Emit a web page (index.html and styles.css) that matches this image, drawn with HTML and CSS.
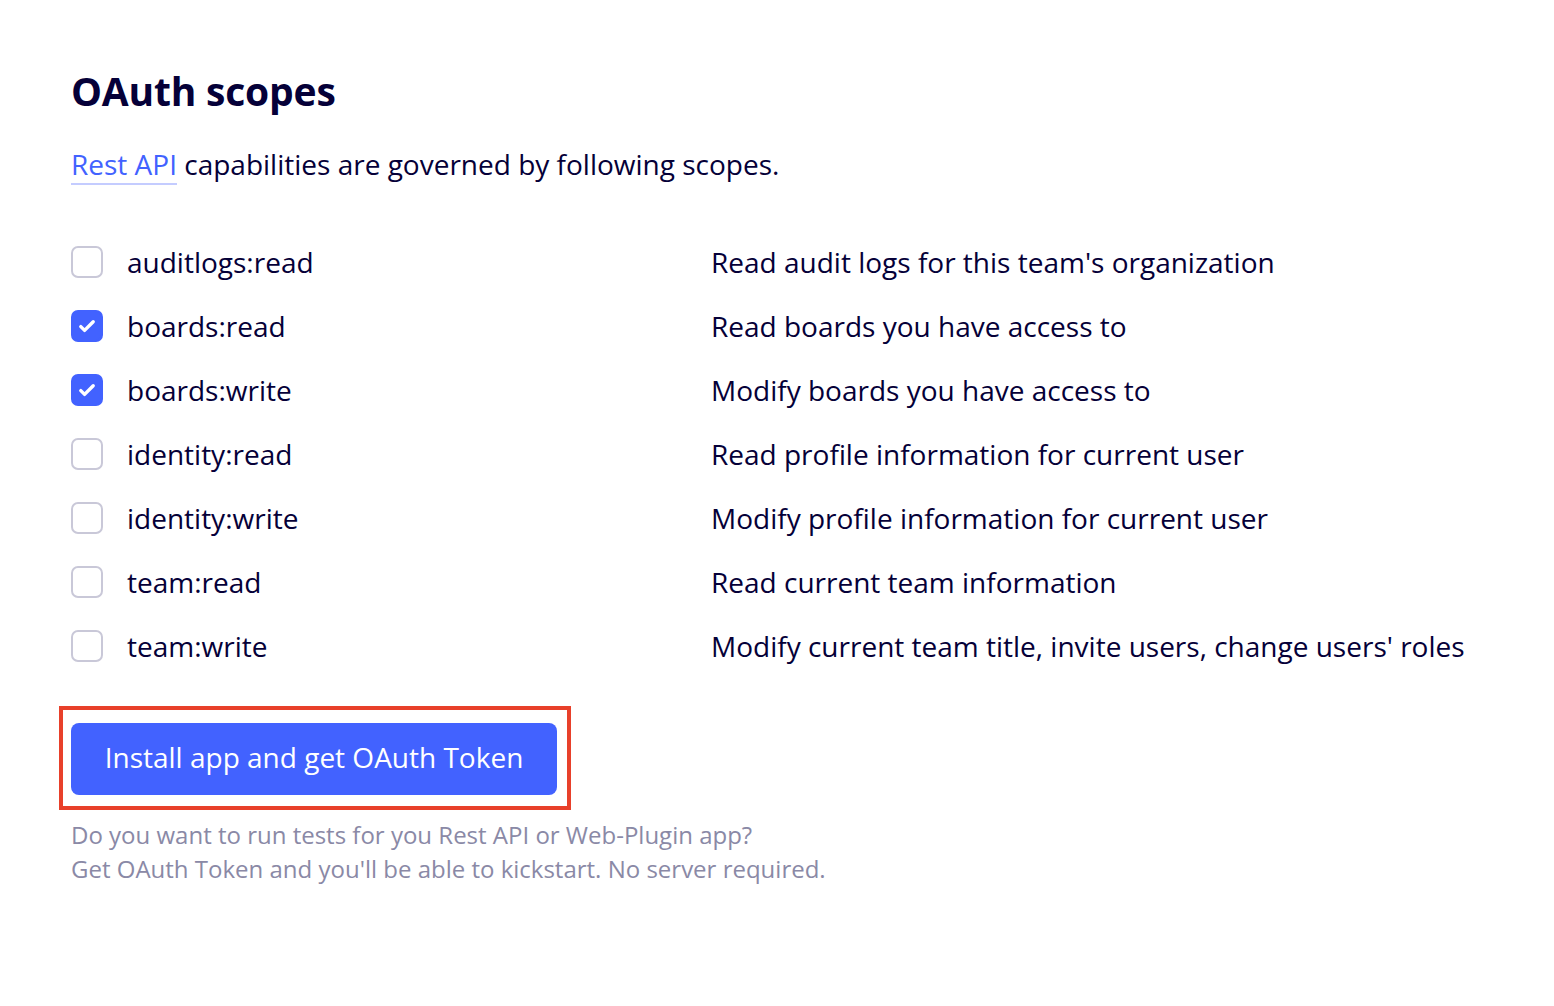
FILE: index.html
```html
<!DOCTYPE html>
<html>
<head>
<meta charset="utf-8">
<link rel="stylesheet" href="styles.css">
</head>
<body>
<main class="page">
  <h1 class="title">OAuth scopes</h1>
  <p class="intro"><a class="link" href="#">Rest API</a> capabilities are governed by following scopes.</p>
  <div class="scopes">
    <div class="scope">
      <label class="name"><span class="box"></span>auditlogs:read</label>
      <span class="desc">Read audit logs for this team's organization</span>
    </div>
    <div class="scope">
      <label class="name"><span class="box checked"><svg viewBox="0 0 32 32"><path d="M9.8 16.6l3.8 3.8 8.6-8.6" fill="none" stroke="#fff" stroke-width="3.4" stroke-linecap="round" stroke-linejoin="round"/></svg></span>boards:read</label>
      <span class="desc">Read boards you have access to</span>
    </div>
    <div class="scope">
      <label class="name"><span class="box checked"><svg viewBox="0 0 32 32"><path d="M9.8 16.6l3.8 3.8 8.6-8.6" fill="none" stroke="#fff" stroke-width="3.4" stroke-linecap="round" stroke-linejoin="round"/></svg></span>boards:write</label>
      <span class="desc">Modify boards you have access to</span>
    </div>
    <div class="scope">
      <label class="name"><span class="box"></span>identity:read</label>
      <span class="desc">Read profile information for current user</span>
    </div>
    <div class="scope">
      <label class="name"><span class="box"></span>identity:write</label>
      <span class="desc">Modify profile information for current user</span>
    </div>
    <div class="scope">
      <label class="name"><span class="box"></span>team:read</label>
      <span class="desc">Read current team information</span>
    </div>
    <div class="scope">
      <label class="name"><span class="box"></span>team:write</label>
      <span class="desc">Modify current team title, invite users, change users' roles</span>
    </div>
  </div>
  <div class="highlight">
    <button class="install">Install app and get OAuth Token</button>
  </div>
  <p class="help">Do you want to run tests for you Rest API or Web-Plugin app?<br>Get OAuth Token and you'll be able to kickstart. No server required.</p>
</main>
</body>
</html>
```
FILE: styles.css
```css
* { box-sizing: border-box; }
body {
  margin: 0;
  background: #fff;
  font-family: "Open Sans", "Noto Sans", sans-serif;
  color: #050038;
}
.page {
  padding: 64px 0 0 71px;
}
.title {
  margin: 0;
  font-size: 39px;
  font-weight: 700;
  line-height: 54px;
  letter-spacing: -0.2px;
}
.intro {
  margin: 26px 0 0;
  font-size: 28px;
  line-height: 40px;
}
.link {
  color: #4262ff;
  text-decoration: none;
  border-bottom: 2px solid #c4ccff;
}
.scopes {
  margin-top: 46px;
  display: flex;
  flex-direction: column;
}
.scope {
  display: grid;
  grid-template-columns: 640px 1fr;
  height: 64px;
  align-items: center;
  font-size: 28px;
}
.name {
  display: flex;
  align-items: center;
  gap: 24px;
}
.box {
  position: relative;
  width: 32px;
  height: 32px;
  border: 2px solid #c9c8d8;
  border-radius: 7px;
}
.box.checked {
  background: #4262ff;
  border-color: #4262ff;
}
.box svg {
  position: absolute;
  left: -2px;
  top: -2px;
  width: 32px;
  height: 32px;
}
.highlight {
  margin: 28px 0 0 -12px;
  width: 512px;
  height: 104px;
  border: 4px solid #e8402a;
  padding: 13px 0 0 8px;
}
.install {
  display: block;
  width: 486px;
  height: 72px;
  background: #4262ff;
  color: #fff;
  border: none;
  border-radius: 8px;
  font-family: "Open Sans", "Noto Sans", sans-serif;
  font-size: 28px;
  padding: 0 0 5px;
}
.help {
  margin: 8px 0 0;
  font-size: 24px;
  line-height: 34px;
  color: #8a89a6;
}
```
